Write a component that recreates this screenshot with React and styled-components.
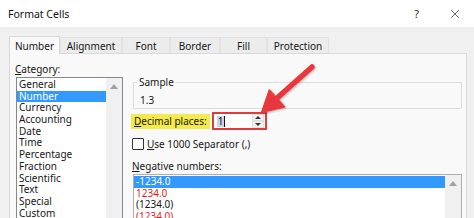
import React from "react";
import styled, { createGlobalStyle } from "styled-components";
import { X } from "lucide-react";

const GlobalStyle = createGlobalStyle`
  html, body {
    margin: 0;
    padding: 0;
    background: #f0f0f0;
  }
  body {
    font-family: "Noto Sans", "Open Sans", sans-serif;
    font-size: 10px;
    color: #161616;
  }
`;

const categories = [
  "General",
  "Number",
  "Currency",
  "Accounting",
  "Date",
  "Time",
  "Percentage",
  "Fraction",
  "Scientific",
  "Text",
  "Special",
  "Custom",
];

const tabs = [
  { label: "Number", width: 51, active: true },
  { label: "Alignment", width: 62 },
  { label: "Font", width: 48 },
  { label: "Border", width: 50 },
  { label: "Fill", width: 47 },
  { label: "Protection", width: 62 },
];

const negatives = [
  { text: "-1234.0", red: false, selected: true },
  { text: "1234.0", red: true },
  { text: "(1234.0)", red: false },
  { text: "(1234.0)", red: true },
];

const App = () => {
  return (
    <>
      <GlobalStyle />
      <Window>
        <TitleBar>
          <Title>Format Cells</Title>
          <TitleButtons>
            <Help>?</Help>
            <X size={14} strokeWidth={1.2} color="#222" />
          </TitleButtons>
        </TitleBar>
        <Body>
          <TabRow>
            {tabs.map((t) => (
              <Tab key={t.label} $active={t.active} $width={t.width}>
                {t.label}
              </Tab>
            ))}
          </TabRow>
          <Panel>
            <LeftCol>
              <Label>
                <u>C</u>ategory:
              </Label>
              <ListBox $border="#828790">
                <Items>
                  {categories.map((c) => (
                    <Item key={c} $selected={c === "Number"}>
                      {c}
                    </Item>
                  ))}
                </Items>
                <ScrollBar>
                  <UpArrow />
                </ScrollBar>
              </ListBox>
            </LeftCol>
            <RightCol>
              <Group>
                <Legend>Sample</Legend>
                <SampleValue>1.3</SampleValue>
              </Group>
              <DecimalRow>
                <Highlight>
                  <u>D</u>ecimal places:
                </Highlight>
                <SpinBox>
                  <SpinInput>
                    <Selected>1</Selected>
                  </SpinInput>
                  <SpinButtons>
                    <SpinHalf>
                      <TinyUp />
                    </SpinHalf>
                    <SpinHalf>
                      <TinyDown />
                    </SpinHalf>
                  </SpinButtons>
                </SpinBox>
              </DecimalRow>
              <CheckRow>
                <CheckBox />
                <span>
                  <u>U</u>se 1000 Separator (,)
                </span>
              </CheckRow>
              <Label $top={8}>
                <u>N</u>egative numbers:
              </Label>
              <ListBox $border="#adadad">
                <Items>
                  {negatives.map((n, i) => (
                    <NegItem key={i} $selected={n.selected} $red={n.red}>
                      {n.text}
                    </NegItem>
                  ))}
                </Items>
                <ScrollBar>
                  <UpArrow />
                </ScrollBar>
              </ListBox>
            </RightCol>
          </Panel>
        </Body>
        <Overlay width="474" height="218" viewBox="0 0 474 218">
          <defs>
            <filter id="sh" x="-20%" y="-20%" width="140%" height="140%">
              <feDropShadow dx="1" dy="1" stdDeviation="1" floodColor="#000" floodOpacity="0.25" />
            </filter>
          </defs>
          <g filter="url(#sh)" fill="#e8383e" stroke="#e8383e">
            <line x1="312" y1="67" x2="276" y2="99" strokeWidth="5.5" strokeLinecap="round" />
            <polygon points="262,112 269.5,90.4 284.3,106.8" strokeWidth="2" strokeLinejoin="round" />
          </g>
        </Overlay>
      </Window>
    </>
  );
};

const Window = styled.div`
  position: relative;
  width: 474px;
  height: 218px;
  overflow: hidden;
  background: #f0f0f0;
`;

const TitleBar = styled.div`
  height: 27px;
  background: #ffffff;
  display: flex;
  align-items: center;
  justify-content: space-between;
  padding: 0 12px 0 8px;
`;

const Title = styled.div`
  font-size: 10.5px;
  color: #111;
`;

const TitleButtons = styled.div`
  display: flex;
  align-items: center;
  gap: 29px;
`;

const Help = styled.span`
  font-size: 11px;
  color: #222;
`;

const Body = styled.div`
  padding: 8px 7px 0 9px;
`;

const TabRow = styled.div`
  display: flex;
  align-items: flex-end;
  height: 18px;
`;

const Tab = styled.div`
  width: ${(p) => p.$width}px;
  height: ${(p) => (p.$active ? 18 : 16)}px;
  box-sizing: border-box;
  display: flex;
  align-items: center;
  justify-content: center;
  background: ${(p) => (p.$active ? "#f9f9f9" : "#ececec")};
  border: 1px solid ${(p) => (p.$active ? "#d9d9d9" : "#e2e2e2")};
  border-bottom: none;
  margin-bottom: ${(p) => (p.$active ? "-1px" : "0")};
  position: relative;
  z-index: ${(p) => (p.$active ? 1 : 0)};
  color: #161616;
  padding-top: 1px;
`;

const Panel = styled.div`
  display: flex;
  gap: 10px;
  background: #f9f9f9;
  border: 1px solid #d9d9d9;
  height: 200px;
  padding: 8px 4px 0 6px;
`;

const LeftCol = styled.div`
  width: 107px;
  display: flex;
  flex-direction: column;
`;

const RightCol = styled.div`
  flex: 1;
  display: flex;
  flex-direction: column;
  padding-top: 13px;
`;

const Label = styled.div`
  line-height: 14px;
  margin-left: -1px;
  margin-top: ${(p) => p.$top || 0}px;
  margin-bottom: 1px;
  & u {
    text-underline-offset: 1px;
  }
`;

const ListBox = styled.div`
  display: flex;
  background: #ffffff;
  border: 1px solid ${(p) => p.$border};
  height: 160px;
`;

const Items = styled.div`
  flex: 1;
  padding-top: 1px;
`;

const Item = styled.div`
  height: 11.7px;
  line-height: 11.7px;
  padding-left: 2px;
  background: ${(p) => (p.$selected ? "#3399ff" : "transparent")};
  color: ${(p) => (p.$selected ? "#ffffff" : "#161616")};
`;

const NegItem = styled.div`
  height: 11.5px;
  line-height: 11.5px;
  padding-left: 2px;
  background: ${(p) => (p.$selected ? "#3399ff" : "transparent")};
  color: ${(p) => (p.$selected ? "#ffffff" : p.$red ? "#e81e1e" : "#161616")};
`;

const ScrollBar = styled.div`
  width: 16px;
  background: #f0f0f0;
  display: flex;
  justify-content: center;
  padding-top: 6px;
`;

const UpArrow = styled.div`
  width: 0;
  height: 0;
  border-left: 4px solid transparent;
  border-right: 4px solid transparent;
  border-bottom: 5px solid #a0a0a0;
`;

const Group = styled.fieldset`
  margin: 0;
  padding: 0 6px 1px 6px;
  min-width: 0;
  border: 1px solid #dcdcdc;
  border-radius: 1px;
`;

const Legend = styled.legend`
  padding: 0 2px;
  margin-left: -3px;
  line-height: 14px;
  color: #161616;
`;

const SampleValue = styled.div`
  line-height: 14px;
  margin-top: 4px;
`;

const DecimalRow = styled.div`
  display: flex;
  align-items: center;
  margin-top: 3px;
  height: 18px;
`;

const Highlight = styled.span`
  background: #f3ea4c;
  margin-left: -2px;
  padding: 0 3px 0 3px;
  height: 15px;
  line-height: 15px;
`;

const SpinBox = styled.div`
  margin-left: 2px;
  width: 55px;
  height: 18px;
  box-sizing: border-box;
  border: 2px solid #e23b3b;
  background: #ffffff;
  display: flex;
`;

const SpinInput = styled.div`
  flex: 1;
  display: flex;
  align-items: center;
  padding-left: 3px;
`;

const Selected = styled.span`
  background: #c9d6e6;
  color: #111;
  line-height: 11px;
  padding: 0 1px;
  border-right: 1px solid #111;
`;

const SpinButtons = styled.div`
  width: 12px;
  margin-right: 1px;
  display: flex;
  flex-direction: column;
`;

const SpinHalf = styled.div`
  flex: 1;
  display: flex;
  align-items: center;
  justify-content: center;
  background: #f2f2f2;
  border: 1px solid #e0e0e0;
`;

const TinyUp = styled.div`
  border-left: 3px solid transparent;
  border-right: 3px solid transparent;
  border-bottom: 3px solid #333;
`;

const TinyDown = styled.div`
  border-left: 3px solid transparent;
  border-right: 3px solid transparent;
  border-top: 3px solid #333;
`;

const CheckRow = styled.div`
  display: flex;
  align-items: center;
  gap: 3px;
  margin-top: 7px;
  margin-left: -1px;
  height: 14px;
`;

const CheckBox = styled.div`
  width: 12px;
  height: 12px;
  box-sizing: border-box;
  border: 1px solid #333;
  border-radius: 1px;
  background: #ffffff;
`;

const Overlay = styled.svg`
  position: absolute;
  left: 0;
  top: 0;
  pointer-events: none;
`;

export default App;
